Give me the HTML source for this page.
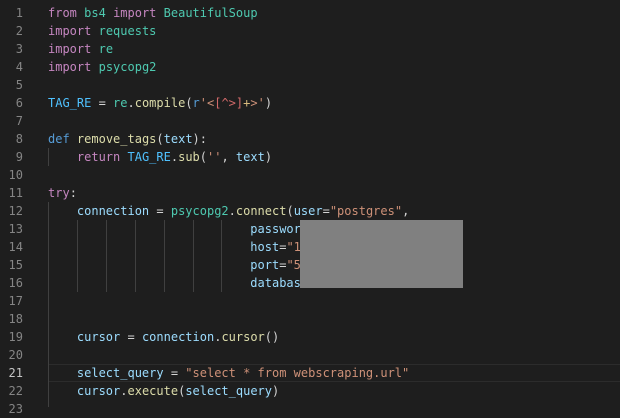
<!DOCTYPE html>
<html><head><style>
body{margin:0;width:620px;height:407px;background:#1e1e1e;overflow:hidden;position:relative;font-family:"DejaVu Sans Mono","Liberation Mono",monospace;font-size:12px;}
.l{position:absolute;left:0;height:18px;line-height:18px;white-space:pre;width:620px}
.n{position:absolute;right:calc(620px - 23px);color:#858585;text-align:right}
.c{position:absolute;left:48px;color:#d4d4d4}
.k{color:#c586c0}.m{color:#4ec9b0}.v{color:#9cdcfe}.t{color:#4fc1ff}.f{color:#dcdcaa}.s{color:#ce9178}.b{color:#569cd6}.r{color:#d16969}.q{color:#d7ba7d}
.g{position:absolute;width:1px;background:#404040}
</style></head><body>
<div class="g" style="left:48px;top:148px;height:18px"></div>
<div class="g" style="left:48px;top:202px;height:205px"></div>
<div class="g" style="left:77px;top:220px;height:72px"></div>
<div class="g" style="left:106px;top:220px;height:72px"></div>
<div class="g" style="left:135px;top:220px;height:72px"></div>
<div class="g" style="left:164px;top:220px;height:72px"></div>
<div class="g" style="left:193px;top:220px;height:72px"></div>
<div class="g" style="left:221px;top:220px;height:72px"></div>
<div style="position:absolute;left:49px;right:0;top:364px;height:16px;border-top:1px solid #2c2c2c;border-bottom:1px solid #2c2c2c"></div>
<div class="l" style="top:4px"><span class="n">1</span><span class="c"><span class="k">from</span> <span class="m">bs4</span> <span class="k">import</span> <span class="m">BeautifulSoup</span></span></div>
<div class="l" style="top:22px"><span class="n">2</span><span class="c"><span class="k">import</span> <span class="m">requests</span></span></div>
<div class="l" style="top:40px"><span class="n">3</span><span class="c"><span class="k">import</span> <span class="m">re</span></span></div>
<div class="l" style="top:58px"><span class="n">4</span><span class="c"><span class="k">import</span> <span class="m">psycopg2</span></span></div>
<div class="l" style="top:76px"><span class="n">5</span></div>
<div class="l" style="top:94px"><span class="n">6</span><span class="c"><span class="t">TAG_RE</span> = <span class="m">re</span>.<span class="f">compile</span>(<span class="b">r</span><span class="s">'&lt;</span><span class="r">[^&gt;]</span><span class="q">+</span><span class="s">&gt;'</span>)</span></div>
<div class="l" style="top:112px"><span class="n">7</span></div>
<div class="l" style="top:130px"><span class="n">8</span><span class="c"><span class="b">def</span> <span class="f">remove_tags</span>(<span class="v">text</span>):</span></div>
<div class="l" style="top:148px"><span class="n">9</span><span class="c">    <span class="k">return</span> <span class="t">TAG_RE</span>.<span class="f">sub</span>(<span class="s">''</span>, <span class="v">text</span>)</span></div>
<div class="l" style="top:166px"><span class="n">10</span></div>
<div class="l" style="top:184px"><span class="n">11</span><span class="c"><span class="k">try</span>:</span></div>
<div class="l" style="top:202px"><span class="n">12</span><span class="c">    <span class="v">connection</span> = <span class="m">psycopg2</span>.<span class="f">connect</span>(<span class="v">user</span>=<span class="s">"postgres"</span>,</span></div>
<div class="l" style="top:220px"><span class="n">13</span><span class="c">                            <span class="v">passwor</span></span></div>
<div class="l" style="top:238px"><span class="n">14</span><span class="c">                            <span class="v">host</span>=<span class="s">"1</span></span></div>
<div class="l" style="top:256px"><span class="n">15</span><span class="c">                            <span class="v">port</span>=<span class="s">"5</span></span></div>
<div class="l" style="top:274px"><span class="n">16</span><span class="c">                            <span class="v">databas</span></span></div>
<div class="l" style="top:292px"><span class="n">17</span></div>
<div class="l" style="top:310px"><span class="n">18</span></div>
<div class="l" style="top:328px"><span class="n">19</span><span class="c">    <span class="v">cursor</span> = <span class="v">connection</span>.<span class="f">cursor</span>()</span></div>
<div class="l" style="top:346px"><span class="n">20</span></div>
<div class="l" style="top:364px"><span class="n" style="color:#c6c6c6">21</span><span class="c">    <span class="v">select_query</span> = <span class="s">"select * from webscraping.url"</span></span></div>
<div class="l" style="top:382px"><span class="n">22</span><span class="c">    <span class="v">cursor</span>.<span class="f">execute</span>(<span class="v">select_query</span>)</span></div>
<div class="l" style="top:400px"><span class="n">23</span></div>
<div style="position:absolute;left:300px;top:220px;width:163px;height:68px;background:#808080"></div>
</body></html>
